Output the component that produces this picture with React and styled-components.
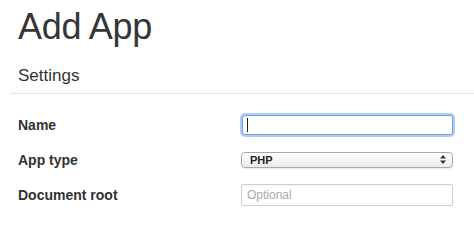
import React from "react";
import styled, { createGlobalStyle } from "styled-components";

const GlobalStyle = createGlobalStyle`
  html, body {
    margin: 0;
    padding: 0;
    background: #ffffff;
  }
  body {
    font-family: "Liberation Sans", Arial, sans-serif;
    color: #333333;
  }
`;

const Page = styled.div`
  width: 474px;
  height: 228px;
  overflow: hidden;
  background: #ffffff;
`;

const Title = styled.h1`
  margin: 7px 0 0 18px;
  height: 40px;
  font-size: 36px;
  line-height: 40px;
  font-weight: 400;
  color: #363636;
  letter-spacing: -0.3px;
`;

const Legend = styled.div`
  margin: 19px 0 0 10px;
  padding: 0 0 7px 8px;
  height: 20px;
  line-height: 20px;
  font-size: 17px;
  color: #333333;
  border-bottom: 1px solid #e5e5e5;
`;

const Form = styled.div`
  display: grid;
  grid-template-columns: 223px 213px;
  grid-auto-rows: 35px;
  margin: 13px 0 0 18px;
  align-items: center;
`;

const Label = styled.label`
  font-size: 14px;
  font-weight: 700;
  color: #333333;
`;

const Field = styled.div`
  position: relative;
  display: flex;
  align-items: center;
`;

const TextInput = styled.input`
  box-sizing: border-box;
  width: ${(p) => (p.$focused ? "211px" : "212px")};
  height: ${(p) => (p.$focused ? "20px" : "22px")};
  margin-left: ${(p) => (p.$focused ? "1px" : "0")};
  padding: 0 5px;
  font-family: "Liberation Sans", Arial, sans-serif;
  font-size: 12px;
  color: #333;
  background: #fff;
  border: 1px solid ${(p) => (p.$focused ? "#6f9fdc" : "#cfcfcf")};
  border-radius: ${(p) => (p.$focused ? "3px" : "2px")};
  box-shadow: ${(p) =>
    p.$focused ? "0 0 0 2px rgba(125, 170, 230, 0.6)" : "inset 0 1px 1px rgba(0,0,0,0.04)"};
  outline: none;

  &::placeholder {
    color: #a9a9a9;
  }
`;

const Caret = styled.span`
  position: absolute;
  left: 6px;
  top: 3px;
  width: 1px;
  height: 14px;
  background: #222;
`;

const SelectBox = styled.div`
  box-sizing: border-box;
  width: 212px;
  height: 16px;
  display: flex;
  align-items: center;
  justify-content: space-between;
  padding: 0 6px 0 8px;
  border: 1px solid #a9a9a9;
  border-radius: 4px;
  background: linear-gradient(#ffffff, #ececec);
  box-shadow: 0 1px 1px rgba(0, 0, 0, 0.08);
  font-size: 11px;
  font-weight: 700;
  color: #222;
`;

const Arrows = () => (
  <svg width="6" height="9" viewBox="0 0 6 9">
    <path d="M3 0 L6 3.5 H0 Z" fill="#333" />
    <path d="M3 9 L6 5.5 H0 Z" fill="#333" />
  </svg>
);

export default function App() {
  return (
    <Page>
      <GlobalStyle />
      <Title>Add App</Title>
      <Legend>Settings</Legend>
      <Form>
        <Label>Name</Label>
        <Field>
          <TextInput $focused type="text" defaultValue="" />
          <Caret />
        </Field>

        <Label>App type</Label>
        <Field>
          <SelectBox>
            <span>PHP</span>
            <Arrows />
          </SelectBox>
        </Field>

        <Label>Document root</Label>
        <Field>
          <TextInput type="text" placeholder="Optional" />
        </Field>
      </Form>
    </Page>
  );
}
